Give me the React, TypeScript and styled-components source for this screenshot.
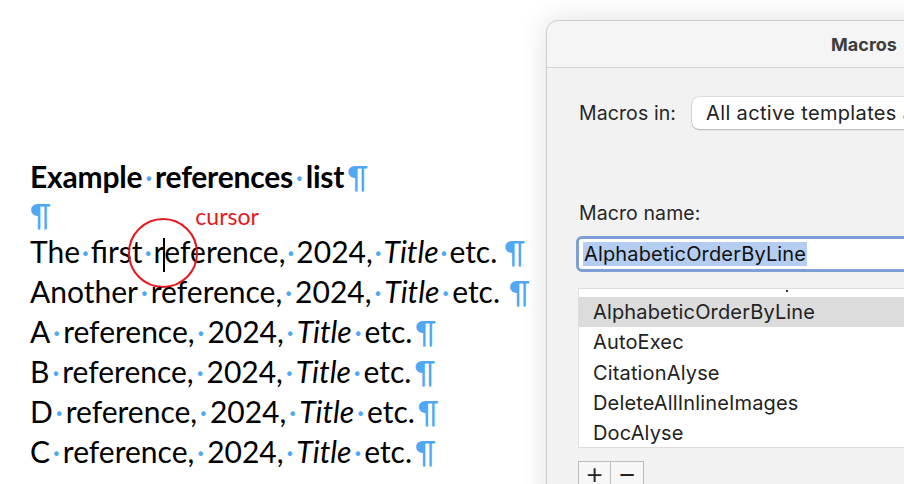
import React from "react";
import styled, { createGlobalStyle } from "styled-components";

const Global = createGlobalStyle`
  html, body { margin: 0; padding: 0; background: #ffffff; overflow: hidden; }
  body { width: 904px; height: 484px; }
  #root { width: 904px; height: 484px; }
`;

const Page = styled.div`
  display: flex;
  width: 904px;
  height: 484px;
  overflow: hidden;
  background: #ffffff;
`;

const Doc = styled.div`
  width: 546px;
  flex: none;
  padding: 155px 0 0 30px;
  box-sizing: border-box;
  font-family: "Lato", "Open Sans", sans-serif;
  color: #000;
  position: relative;
`;

const Heading = styled.div`
  font-weight: 700;
  font-size: 30px;
  line-height: 42px;
  letter-spacing: -0.2px;
  white-space: nowrap;
`;

const Line = styled.div<{ $tight?: boolean }>`
  font-size: 30px;
  line-height: ${(p) => (p.$tight ? 34 : 40)}px;
  white-space: nowrap;
  position: relative;
`;

const Dot = styled.span<{ $pad?: number }>`
  color: #4ea8f2;
  font-weight: 400;
  padding: 0 ${(p) => p.$pad ?? 2.5}px;
`;

const Pil = styled.span<{ $gap?: number }>`
  color: #4ea8f2;
  font-weight: 400;
  padding-left: ${(p) => (p.$gap ?? 3)}px;
`;

const Ital = styled.span`
  font-style: italic;
`;

const CursorMark = styled.span`
  position: relative;
  display: inline-block;
  width: 0;
  height: 0;
  vertical-align: baseline;
`;

const Caret = styled.span`
  position: absolute;
  left: -1px;
  top: -25px;
  width: 1.5px;
  height: 34px;
  background: #000;
`;

const Circle = styled.span`
  position: absolute;
  left: -36px;
  top: -45px;
  width: 66px;
  height: 66px;
  border: 2px solid #e8181e;
  border-radius: 50%;
`;

const CursorLabel = styled.span`
  position: absolute;
  left: 31px;
  top: -58px;
  font-family: "Lato", sans-serif;
  font-size: 23px;
  color: #e8181e;
  line-height: 1;
  white-space: nowrap;
`;

const Dialog = styled.div`
  flex: none;
  width: 636px;
  margin-top: 20px;
  height: 500px;
  background: #f2f2f2;
  border: 1px solid #cdcdcd;
  border-radius: 12px 12px 0 0;
  box-shadow: 0 0 28px rgba(0, 0, 0, 0.13);
  font-family: "Inter", "Liberation Sans", sans-serif;
  color: #222;
  box-sizing: border-box;
  display: flex;
  flex-direction: column;
`;

const TitleBar = styled.div`
  height: 46px;
  flex: none;
  border-bottom: 1px solid #d4d4d4;
  display: flex;
  align-items: center;
  justify-content: center;
  font-weight: 700;
  font-size: 18px;
  color: #3d3d3d;
  background: #f5f5f5;
  border-radius: 12px 12px 0 0;
`;

const Body = styled.div`
  padding: 29px 0 0 32px;
  display: flex;
  flex-direction: column;
`;

const Row = styled.div`
  display: flex;
  align-items: center;
  gap: 16px;
`;

const Label = styled.div`
  font-size: 19.5px;
  color: #262626;
  letter-spacing: 0.1px;
`;

const Select = styled.div`
  height: 32px;
  width: 400px;
  box-sizing: border-box;
  background: #fff;
  border-radius: 7px;
  box-shadow: 0 0 0 0.5px rgba(0,0,0,0.18), 0 1px 1.5px rgba(0,0,0,0.18);
  display: flex;
  align-items: center;
  padding-left: 14px;
  font-size: 20px;
  letter-spacing: 0.35px;
  color: #222;
  white-space: nowrap;
  overflow: hidden;
`;

const NameLabel = styled(Label)`
  margin-top: 72px;
`;

const Input = styled.div`
  margin-top: 11px;
  margin-left: -3px;
  height: 36px;
  width: 600px;
  box-sizing: border-box;
  border: 3.5px solid #7d9fd6;
  border-radius: 6px;
  background: #fff;
  display: flex;
  align-items: center;
  padding-left: 4px;
`;

const Selected = styled.span`
  background: #b5cdf0;
  font-size: 20px;
  letter-spacing: 0.15px;
  line-height: 24px;
  color: #111;
  padding: 0 1px;
`;

const List = styled.div`
  margin-top: 16px;
  margin-left: -1px;
  width: 600px;
  height: 160px;
  box-sizing: border-box;
  border: 1px solid #dedede;
  background: #fff;
  display: flex;
  flex-direction: column;
  overflow: hidden;
`;

const Peek = styled.div`
  height: 8px;
  flex: none;
  position: relative;
`;

const PeekTick = styled.span`
  position: absolute;
  left: 207px;
  top: 1px;
  width: 2px;
  height: 2px;
  background: #333;
`;

const Item = styled.div<{ $sel?: boolean }>`
  height: 30.3px;
  flex: none;
  display: flex;
  align-items: center;
  padding-left: 14px;
  font-size: 20px;
  letter-spacing: 0.15px;
  color: #222;
  background: ${(p) => (p.$sel ? "#dcdcdc" : "transparent")};
`;

const Buttons = styled.div`
  margin-top: 13px;
  margin-left: -1px;
  display: flex;
`;

const SmallBtn = styled.div`
  width: 33px;
  height: 24px;
  box-sizing: border-box;
  border: 1px solid #bdbdbd;
  border-bottom: none;
  background: #f7f7f7;
  display: flex;
  align-items: flex-start;
  justify-content: center;
  font-size: 30px;
  font-weight: 300;
  line-height: 22px;
  color: #222;
  & + & { border-left: none; }
`;

const D = ({ pad }: { pad?: number }) => <Dot $pad={pad}>·</Dot>;

export default function App() {
  return (
    <>
      <Global />
      <Page>
        <Doc>
          <Heading>
            Example<D />references<D />list<Pil>¶</Pil>
          </Heading>
          <Line $tight>
            <Pil $gap={0}>¶</Pil>
          </Line>
          <Line>
            The<D pad={1.5} />first<D pad={1.5} />r
            <CursorMark>
              <Circle />
              <Caret />
              <CursorLabel>cursor</CursorLabel>
            </CursorMark>
            eference,<D pad={1.5} />2024,<D pad={1.5} />
            <Ital>Title</Ital>
            <D pad={1.5} />etc.<Pil $gap={7}>¶</Pil>
          </Line>
          <Line>
            Another<D />reference,<D />2024,<D />
            <Ital>Title</Ital>
            <D />etc.<Pil $gap={9}>¶</Pil>
          </Line>
          <Line>
            A<D />reference,<D />2024,<D />
            <Ital>Title</Ital>
            <D />etc.<Pil>¶</Pil>
          </Line>
          <Line>
            B<D />reference,<D />2024,<D />
            <Ital>Title</Ital>
            <D />etc.<Pil>¶</Pil>
          </Line>
          <Line>
            D<D />reference,<D />2024,<D />
            <Ital>Title</Ital>
            <D />etc.<Pil>¶</Pil>
          </Line>
          <Line>
            C<D />reference,<D />2024,<D />
            <Ital>Title</Ital>
            <D />etc.<Pil>¶</Pil>
          </Line>
        </Doc>
        <Dialog>
          <TitleBar>Macros</TitleBar>
          <Body>
            <Row>
              <Label>Macros in:</Label>
              <Select>All active templates and documents</Select>
            </Row>
            <NameLabel>Macro name:</NameLabel>
            <Input>
              <Selected>AlphabeticOrderByLine</Selected>
            </Input>
            <List>
              <Peek>
                <PeekTick />
              </Peek>
              <Item $sel>AlphabeticOrderByLine</Item>
              <Item>AutoExec</Item>
              <Item>CitationAlyse</Item>
              <Item>DeleteAllInlineImages</Item>
              <Item>DocAlyse</Item>
            </List>
            <Buttons>
              <SmallBtn>+</SmallBtn>
              <SmallBtn>−</SmallBtn>
            </Buttons>
          </Body>
        </Dialog>
      </Page>
    </>
  );
}
